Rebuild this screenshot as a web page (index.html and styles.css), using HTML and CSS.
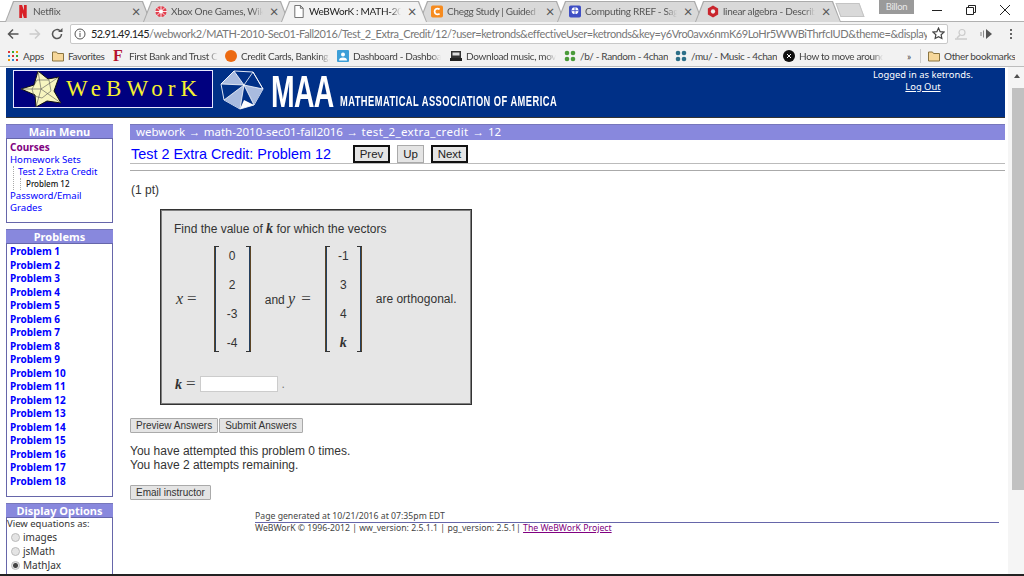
FILE: index.html
```html
<!DOCTYPE html>
<html lang="en">
<head>
    <meta charset="UTF-8">
    <title>WeBWorK : MATH-2010-Sec01-Fall2016 : Test_2_Extra_Credit : 12</title>
    <link rel="stylesheet" href="styles.css">
</head>
<body>
    <div class="tabstrip">
        <div class="tab">
            <svg class="tab-icon" viewBox="0 0 12 14"><path d="M2 0h3l2 6V0h3v14H7L5 8v6H2z" fill="#d81f26"/></svg>
            <span class="tab-title">Netflix</span><span class="tab-close">×</span>
        </div>
        <div class="tab">
            <svg class="tab-icon" viewBox="0 0 14 14"><circle cx="7" cy="7" r="6.5" fill="#e2404f"/><circle cx="7" cy="7" r="2.2" fill="#fff"/><path d="M7 0v14M0 7h14M2 2l10 10M12 2L2 12" stroke="#fff" stroke-width="1"/></svg>
            <span class="tab-title">Xbox One Games, Wikis</span><span class="tab-close">×</span>
        </div>
        <div class="tab tab-active">
            <svg class="tab-icon" viewBox="0 0 12 14"><path d="M1.5.5h6l3 3v10h-9zM7.5.5v3h3" fill="#fff" stroke="#666"/></svg>
            <span class="tab-title">WeBWorK : MATH-201</span><span class="tab-close">×</span>
        </div>
        <div class="tab">
            <svg class="tab-icon" viewBox="0 0 14 14"><rect width="14" height="14" rx="2" fill="#f68b1f"/><path d="M10 4.6A3.4 3.4 0 1 0 10 9.4" fill="none" stroke="#fff" stroke-width="2"/></svg>
            <span class="tab-title">Chegg Study | Guided S</span><span class="tab-close">×</span>
        </div>
        <div class="tab">
            <svg class="tab-icon" viewBox="0 0 14 14"><rect width="14" height="14" rx="2" fill="#3f4fc4"/><circle cx="7" cy="6" r="4" fill="#fff"/><path d="M3 6h8M7 2v8M2 11h10" stroke="#3f4fc4"/></svg>
            <span class="tab-title">Computing RREF - Sage</span><span class="tab-close">×</span>
        </div>
        <div class="tab">
            <svg class="tab-icon" viewBox="0 0 14 14"><path d="M7 0l6 3.5v7L7 14l-6-3.500v-7z" fill="#c9252d"/><circle cx="7" cy="7" r="2.500" fill="#eee"/></svg>
            <span class="tab-title">linear algebra - Describ</span><span class="tab-close">×</span>
        </div>
        <div class="tab-new"></div>
        <div class="user-badge">Billon</div>
        <div class="window-controls">
            <svg viewBox="0 0 12 12"><path d="M1 6.500h10" stroke="#222"/></svg>
            <svg viewBox="0 0 12 12"><path d="M1.500 3.500h7v7h-7zM3.500 3.500v-2h7v7h-2" fill="none" stroke="#222"/></svg>
            <svg viewBox="0 0 12 12"><path d="M1 1l10 10M11 1L1 11" stroke="#222"/></svg>
        </div>
    </div>

    <div class="toolbar">
        <svg class="tool-icon" viewBox="0 0 12 12"><path d="M11.500 6H1.500M6 1.500L1.500 6 6 10.500" fill="none" stroke="#555" stroke-width="1.500"/></svg>
        <svg class="tool-icon" viewBox="0 0 12 12"><path d="M.5 6h10M6 1.500L10.500 6 6 10.500" fill="none" stroke="#ccc" stroke-width="1.500"/></svg>
        <svg class="tool-icon" viewBox="0 0 12 12"><path d="M10.500 6A4.500 4.500 0 1 1 9 2.700" fill="none" stroke="#555" stroke-width="1.500"/><path d="M7 4h4.500V0z" fill="#555"/></svg>
        <div class="address">
            <svg class="info-icon" viewBox="0 0 12 12"><circle cx="6" cy="6" r="5" fill="none" stroke="#555"/><path d="M6 5v4M6 3v1.200" stroke="#555"/></svg>
            <span class="url"><b>52.91.49.145</b>/webwork2/MATH-2010-Sec01-Fall2016/Test_2_Extra_Credit/12/?user=ketronds&amp;effectiveUser=ketronds&amp;key=y6Vro0avx6nmK69LoHr5WWBiThrfcIUD&amp;theme=&amp;display</span>
            <svg class="star-icon" viewBox="0 0 12 12"><path d="M6 1l1.500 3.300 3.500.4-2.600 2.400.7 3.500L6 8.900l-3.100 1.700.7-3.500L1 4.700l3.500-.4z" fill="none" stroke="#444" stroke-width="1.100"/></svg>
        </div>
        <div class="tool-right">
            <svg viewBox="0 0 14 12"><circle cx="8" cy="4.500" r="3" fill="none" stroke="#ccc" stroke-width="1.200"/><path d="M1 11h12M6 7L3 10" stroke="#ccc" stroke-width="1.500"/></svg>
            <svg viewBox="0 0 14 12"><path d="M7 1v10l6-5z" fill="#555"/><path d="M4.500 2.500v7M2 4v4" stroke="#888"/></svg>
            <svg viewBox="0 0 14 12"><path d="M7 1v2M7 5v2M7 9v2" stroke="#555" stroke-width="1.800"/></svg>
        </div>
    </div>

    <div class="bookmarks">
        <div class="bm bm-apps">
            <svg class="bm-icon" viewBox="0 0 10 10"><path d="M0 0h2v2H0z" fill="#d33"/><path d="M4 0h2v2H4z" fill="#3a3"/><path d="M8 0h2v2H8z" fill="#e90"/><path d="M0 4h2v2H0z" fill="#38c"/><path d="M4 4h2v2H4z" fill="#d33"/><path d="M8 4h2v2H8z" fill="#3a3"/><path d="M0 8h2v2H0z" fill="#e90"/><path d="M4 8h2v2H4z" fill="#38c"/><path d="M8 8h2v2H8z" fill="#d33"/></svg>
            <span class="bm-text">Apps</span>
        </div>
        <div class="bm bm-favorites">
            <svg class="bm-icon" viewBox="0 0 12 11"><path d="M.5 1.500h4l1 1.500h6v7.500H.5z" fill="#f6d79a" stroke="#8a7440"/></svg>
            <span class="bm-text">Favorites</span>
        </div>
        <div class="bm bm-first">
            <span class="first-f">F</span>
            <span class="bm-text">First Bank and Trust C</span>
        </div>
        <div class="bm bm-credit">
            <svg class="bm-icon" viewBox="0 0 12 12"><circle cx="6" cy="6" r="6" fill="#ec6a12"/></svg>
            <span class="bm-text">Credit Cards, Banking,</span>
        </div>
        <div class="bm bm-dash">
            <svg class="bm-icon" viewBox="0 0 12 12"><rect width="12" height="12" rx="1" fill="#3d9fd8"/><circle cx="6" cy="4.500" r="2" fill="#fff"/><path d="M2 10.500a4 3 0 0 1 8 0z" fill="#fff"/></svg>
            <span class="bm-text">Dashboard - Dashboa</span>
        </div>
        <div class="bm bm-download">
            <svg class="bm-icon" viewBox="0 0 12 12"><rect x="1" y="1" width="10" height="7" fill="#333"/><rect x="2.500" y="2.500" width="7" height="3" fill="#ddd"/><rect y="8" width="12" height="3" fill="#222"/></svg>
            <span class="bm-text">Download music, mov</span>
        </div>
        <div class="bm bm-b">
            <svg class="bm-icon" viewBox="0 0 12 12"><circle cx="3" cy="3" r="2.300" fill="#4a9b3a"/><circle cx="9" cy="3" r="2.300" fill="#4a9b3a"/><circle cx="3" cy="9" r="2.300" fill="#4a9b3a"/><circle cx="9" cy="9" r="2.300" fill="#4a9b3a"/></svg>
            <span class="bm-text">/b/ - Random - 4chan</span>
        </div>
        <div class="bm bm-mu">
            <svg class="bm-icon" viewBox="0 0 12 12"><circle cx="3" cy="3" r="2.300" fill="#2d6f88"/><circle cx="9" cy="3" r="2.300" fill="#2d6f88"/><circle cx="3" cy="9" r="2.300" fill="#2d6f88"/><circle cx="9" cy="9" r="2.300" fill="#2d6f88"/></svg>
            <span class="bm-text">/mu/ - Music - 4chan</span>
        </div>
        <div class="bm bm-move">
            <svg class="bm-icon" viewBox="0 0 12 12"><circle cx="6" cy="6" r="6" fill="#111"/><path d="M4 4l4 4M8 4L4 8" stroke="#fff"/></svg>
            <span class="bm-text">How to move around</span>
        </div>
        <span class="bm-more">»</span>
        <span class="bm-sep"></span>
        <div class="bm bm-other">
            <svg class="bm-icon" viewBox="0 0 12 11"><path d="M.5 1.500h4l1 1.500h6v7.500H.5z" fill="#f6d79a" stroke="#8a7440"/></svg>
            <span class="bm-text">Other bookmarks</span>
        </div>
    </div>

    <div class="viewport">
        <div class="page">
            <div class="masthead">
                <div class="ww-logo">
                    <svg class="ww-star" viewBox="0 0 42 36"><path d="M0 18L13 14 17 0 27 8 38 6 33 20 40 32 26 30 15 36 14 24z" fill="#f7f5c0" stroke="#111"/><path d="M0 18L20 18 17 0M20 18L38 6M20 18L40 32M20 18L15 36M11 18L16 9 28 9 30 20 21 27 13 25z" fill="none" stroke="#555" stroke-width=".6"/></svg>
                    <span class="ww-name">WeBWorK</span>
                </div>
                <svg class="maa-mark" viewBox="0 0 44 40"><path d="M14 1L33 2 43 19 34 35 20 39 4 30 1 14z" fill="#003087" stroke="#dfe6f5"/><path d="M14 1L24 15 1 14zM24 15L43 19 34 35zM24 15L4 30 20 39z" fill="#a9bbdf"/><path d="M14 1L24 15 43 19M24 15L4 30M24 15L1 14M24 15L34 35M14 1L1 14M33 2L24 15M24 15L20 39M33 2L43 19" fill="none" stroke="#fff" stroke-width=".8"/><path d="M20 39L34 35 24 30z" fill="#fff"/></svg>
                <span class="maa-big">MAA</span>
                <span class="maa-long">MATHEMATICAL ASSOCIATION OF AMERICA</span>
                <div class="login-info">Logged in as ketronds.<br><a href="#">Log Out</a></div>
            </div>

            <div class="columns">
                <div class="sidebar">
                    <div class="side-box box-menu">
                        <h2>Main Menu</h2>
                        <a class="menu-link visited" href="#"><b>Courses</b></a>
                        <a class="menu-link" href="#">Homework Sets</a>
                        <div class="sub-menu">
                            <a class="menu-link" href="#">Test 2 Extra Credit</a>
                            <div class="sub-sub-menu">Problem 12</div>
                        </div>
                        <a class="menu-link" href="#">Password/Email</a>
                        <a class="menu-link" href="#">Grades</a>
                    </div>
                    <div class="side-box box-problems">
                        <h2>Problems</h2>
                        <a href="#">Problem 1</a>
                        <a href="#">Problem 2</a>
                        <a href="#">Problem 3</a>
                        <a href="#">Problem 4</a>
                        <a href="#">Problem 5</a>
                        <a href="#">Problem 6</a>
                        <a href="#">Problem 7</a>
                        <a href="#">Problem 8</a>
                        <a href="#">Problem 9</a>
                        <a href="#">Problem 10</a>
                        <a href="#">Problem 11</a>
                        <a href="#">Problem 12</a>
                        <a href="#">Problem 13</a>
                        <a href="#">Problem 14</a>
                        <a href="#">Problem 15</a>
                        <a href="#">Problem 16</a>
                        <a href="#">Problem 17</a>
                        <a href="#">Problem 18</a>
                    </div>
                    <div class="side-box box-options">
                        <h2>Display Options</h2>
                        <div class="option-label">View equations as:</div>
                        <label class="option"><span class="radio"></span>images</label>
                        <label class="option"><span class="radio"></span>jsMath</label>
                        <label class="option"><span class="radio radio-on"></span>MathJax</label>
                    </div>
                </div>

                <div class="content">
                    <div class="breadcrumb">webwork <span class="arrow">→</span> math-2010-sec01-fall2016 <span class="arrow">→</span> <span class="crumb-test">test_2_extra_credit</span> <span class="arrow arrow-last">→</span> 12</div>
                    <div class="title-row">
                        <h1>Test 2 Extra Credit: Problem 12</h1>
                        <div class="nav-buttons">
                            <span class="nav-btn nav-strong">Prev</span>
                            <span class="nav-btn">Up</span>
                            <span class="nav-btn nav-strong">Next</span>
                        </div>
                    </div>
                    <div class="title-rule"></div>
                    <p class="points">(1 pt)</p>
                    <div class="problem">
                        <p class="problem-text">Find the value of <i class="var var-k">k</i> for which the vectors</p>
                        <div class="equation">
                            <span class="math"><i class="var">x</i><span class="eq">=</span></span>
                            <div class="matrix matrix-x">
                                <span>0</span><span>2</span><span>-3</span><span>-4</span>
                            </div>
                            <span class="and">and <span class="math"><i class="var">y</i><span class="eq">=</span></span></span>
                            <div class="matrix matrix-y">
                                <span>-1</span><span>3</span><span>4</span><span><i class="var var-k">k</i></span>
                            </div>
                            <span class="tail">are orthogonal.</span>
                        </div>
                        <div class="answer">
                            <span class="math"><i class="var var-k">k</i><span class="eq">=</span></span>
                            <input class="answer-box" type="text">
                            <span class="answer-dot">.</span>
                        </div>
                    </div>
                    <div class="actions">
                        <button>Preview Answers</button><button>Submit Answers</button>
                    </div>
                    <p class="attempts">You have attempted this problem 0 times.<br>You have 2 attempts remaining.</p>
                    <button class="email-btn">Email instructor</button>
                    <div class="footer">
                        <div class="generated">Page generated at 10/21/2016 at 07:35pm EDT</div>
                        <div class="copyright">WeBWorK © 1996-2012 | ww_version: 2.5.1.1 | pg_version: 2.5.1| <a href="#">The WeBWorK Project</a></div>
                    </div>
                </div>
            </div>
        </div>
        <div class="scrollbar">
            <span class="scroll-up"></span>
            <div class="scroll-thumb"></div>
        </div>
    </div>
    <div class="taskbar"></div>
</body>
</html>
```

FILE: styles.css
```css
html, body {
    margin: 0;
    padding: 0;
    height: 576px;
    overflow: hidden;
    background: #fff;
}
body {
    font-family: "Liberation Sans", Arial, sans-serif;
    display: flex;
    flex-direction: column;
}

/* browser chrome */
.tabstrip {
    height: 22px;
    flex: none;
    display: flex;
    align-items: flex-end;
    padding-left: 5px;
    position: relative;
    border-bottom: 1px solid #b0b0b0;
    box-sizing: border-box;
    font-family: Lato, sans-serif;
    font-size: 10px;
    letter-spacing: -.3px;
}
.tab {
    width: 146px;
    height: 21px;
    margin-left: -8px;
    margin-bottom: -1px;
    flex: none;
    box-sizing: border-box;
    padding: 0 8px 1px 12px;
    display: flex;
    align-items: center;
    position: relative;
    color: #555;
    background: #ababab;
    clip-path: polygon(0 100%, 8px 0, calc(100% - 8px) 0, 100% 100%);
}
.tab::before {
    content: "";
    position: absolute;
    inset: 1px 1px 0;
    background: #d9d9d9;
    clip-path: polygon(0 100%, 8px 0, calc(100% - 8px) 0, 100% 100%);
}
.tab:first-child {
    margin-left: 0;
}
.tab-active {
    color: #222;
    z-index: 2;
}
.tab-active::before {
    background: #f2f2f2;
}
.tab-icon {
    width: 12px;
    height: 13px;
    flex: none;
    margin-right: 4px;
    position: relative;
}
.tab-title {
    flex: 1;
    white-space: nowrap;
    overflow: hidden;
    position: relative;
    -webkit-mask-image: linear-gradient(to right, #000 88%, transparent);
}
.tab-close {
    position: relative;
    width: 14px;
    text-align: center;
    font-size: 15px;
    line-height: 14px;
    color: #555;
    margin-left: 4px;
}
.tab-new {
    width: 22px;
    height: 12px;
    margin: 0 0 4px -3px;
    background: #d9d9d9;
    border: 1px solid #c4c4c4;
    transform: skewX(20deg);
    flex: none;
}
.user-badge {
    position: absolute;
    left: 879px;
    top: 0;
    width: 35px;
    height: 14px;
    background: #9a9a9a;
    color: #e8e8e8;
    text-align: center;
    font-size: 9.500px;
    line-height: 14px;
}
.window-controls {
    position: absolute;
    right: 2px;
    top: 4px;
    display: flex;
}
.window-controls svg {
    width: 12px;
    height: 12px;
    padding: 0 11px;
}
.toolbar {
    height: 23px;
    flex: none;
    background: #f2f2f2;
    display: flex;
    align-items: center;
    padding-left: 7px;
    box-sizing: border-box;
}
.tool-icon {
    width: 12px;
    height: 12px;
    margin-right: 10px;
    flex: none;
}
.address {
    width: 878px;
    height: 20px;
    margin-left: -3px;
    flex: none;
    box-sizing: border-box;
    background: #fff;
    border: 1px solid #c8c8c8;
    border-radius: 2px;
    display: flex;
    align-items: center;
    padding-left: 3px;
    font-family: Lato, sans-serif;
    font-size: 11px;
    letter-spacing: -.4px;
    color: #777;
}
.info-icon {
    width: 12px;
    height: 12px;
    flex: none;
    margin-right: 5px;
}
.url {
    width: 836px;
    flex: none;
    white-space: nowrap;
    overflow: hidden;
}
.url b {
    font-weight: 400;
    color: #222;
    letter-spacing: -.6px;
}
.star-icon {
    width: 13px;
    height: 13px;
    flex: none;
    margin-left: 5px;
}
.tool-right {
    display: flex;
    margin-left: 6px;
    flex: none;
}
.tool-right svg {
    width: 14px;
    height: 12px;
    margin-right: 11px;
}
.bookmarks {
    height: 22px;
    flex: none;
    background: #f2f2f2;
    border-bottom: 1px solid #bdbdbd;
    box-sizing: border-box;
    display: flex;
    align-items: center;
    padding: 1px 0 0 8px;
    font-family: Lato, sans-serif;
    font-size: 10px;
    letter-spacing: -.35px;
    color: #444;
}
.bm {
    display: flex;
    align-items: center;
    flex: none;
    overflow: hidden;
}
.bm-icon {
    width: 12px;
    height: 12px;
    flex: none;
    margin-right: 4px;
}
.bm-apps .bm-icon {
    width: 10px;
    height: 10px;
    margin-right: 5px;
}
.bm-text {
    white-space: nowrap;
    overflow: hidden;
    -webkit-mask-image: linear-gradient(to right, #000 88%, transparent);
}
.bm-apps .bm-text, .bm-favorites .bm-text, .bm-other .bm-text,
.bm-b .bm-text, .bm-mu .bm-text {
    -webkit-mask-image: none;
}
.first-f {
    width: 11px;
    margin-right: 5px;
    font: bold 16px/16px "Liberation Serif", serif;
    color: #b5122f;
}
.bm-apps { width: 44px; }
.bm-favorites { width: 61px; }
.bm-first { width: 112px; }
.bm-credit { width: 112px; }
.bm-dash { width: 113px; }
.bm-download { width: 114px; }
.bm-b { width: 111px; }
.bm-mu { width: 108px; }
.bm-move { width: 100px; }
.bm-more {
    width: 10px;
    margin-left: 24px;
    flex: none;
}
.bm-sep {
    width: 1px;
    height: 14px;
    margin: 0 7px 0 3px;
    background: #ccc;
    flex: none;
}
.bm-other { width: 90px; }

/* page */
.viewport {
    flex: 1;
    min-height: 0;
    display: flex;
    overflow: hidden;
}
.page {
    width: 1008px;
    flex: none;
    box-sizing: border-box;
    padding: 1px 3px 0 6px;
    font-family: "Noto Sans", sans-serif;
}
.scrollbar {
    flex: 1;
    background: #f5f5f5;
    position: relative;
    box-sizing: border-box;
    padding: 21px 0 0 4px;
}
.scroll-up {
    position: absolute;
    left: 6px;
    top: 7px;
    border: 3.500px solid transparent;
    border-top: 0;
    border-bottom: 4px solid #505050;
}
.scroll-thumb {
    height: 402px;
    background: #c1c1c1;
}
.taskbar {
    height: 2px;
    flex: none;
    background: #222;
}
.masthead {
    height: 50px;
    background: #003087;
    border-bottom: 1px solid #333;
    box-sizing: border-box;
    display: flex;
    align-items: flex-start;
    padding: 2px 0 0 7px;
    position: relative;
    color: #fff;
}
.ww-logo {
    width: 200px;
    height: 38px;
    flex: none;
    box-sizing: border-box;
    background: #00007f;
    border: 1px solid #e8e8ff;
    display: flex;
    align-items: center;
    padding-left: 7px;
}
.ww-star {
    width: 42px;
    height: 36px;
    flex: none;
}
.ww-name {
    margin-left: 3px;
    font: 23px "Liberation Serif", serif;
    letter-spacing: 5px;
    color: #f6f030;
}
.maa-mark {
    width: 44px;
    height: 40px;
    flex: none;
    margin: 0 0 0 7px;
}
.maa-big {
    margin: 0 -37px 0 7px;
    font: bold 45px/43px "Liberation Sans", sans-serif;
    letter-spacing: -1px;
    flex: none;
    transform: scaleX(.63);
    transform-origin: left center;
}
.maa-long {
    margin: 21px 0 0 7px;
    font: bold 14px/20px "Liberation Sans", sans-serif;
    letter-spacing: .7px;
    white-space: nowrap;
    flex: none;
    transform: scaleX(.665);
    transform-origin: left center;
}
.login-info {
    position: absolute;
    right: 32px;
    top: 1px;
    text-align: center;
    font-size: 9.400px;
    line-height: 12px;
}
.login-info a {
    color: #fff;
}
.columns {
    display: flex;
    margin-top: 6px;
}
.sidebar {
    width: 107px;
    flex: none;
}
.side-box {
    border: 1px solid #6666aa;
    border-top: 0;
    margin-bottom: 6px;
    box-sizing: border-box;
    font-size: 10px;
    line-height: 13.500px;
    background: #fff;
}
.side-box h2 {
    margin: 0 -1px 1px;
    height: 15px;
    background: #8888dd;
    border-top: 1px solid #7777bb;
    border-bottom: 1px solid #6666aa;
    box-sizing: border-box;
    color: #fff;
    text-align: center;
    font-size: 11px;
    line-height: 14px;
    font-weight: 700;
}
.side-box a {
    display: block;
    color: #0000ff;
    text-decoration: none;
    padding-left: 3px;
}
.box-menu {
    height: 99px;
    font-size: 9.600px;
    line-height: 12px;
}
.box-menu h2 {
    margin-bottom: 2px;
}
.box-menu b {
    font-size: 10px;
}
.box-menu a.visited {
    color: #800080;
}
.sub-menu {
    margin-left: 6px;
    padding-left: 4px;
    border-left: 1px dotted #aaa;
    font-size: 9.400px;
    line-height: 12px;
}
.sub-menu .menu-link {
    padding-left: 0;
}
.sub-sub-menu {
    margin-left: 2px;
    padding-left: 5px;
    border-left: 1px dotted #aaa;
    font-size: 8px;
    color: #111;
    font-weight: 500;
}
.box-problems {
    height: 268px;
}
.box-problems a {
    font-weight: 700;
}
.box-options {
    height: 80px;
    color: #333;
}
.box-options h2 {
    margin-bottom: 0;
}
.option-label {
    font-size: 9.500px;
    line-height: 12.500px;
}
.option {
    display: flex;
    align-items: center;
    padding-left: 4px;
    height: 14px;
    font-size: 10px;
}
.radio {
    width: 9px;
    height: 9px;
    margin-right: 3px;
    border: 1px solid #bbb;
    border-radius: 50%;
    background: #e4e4e4;
    box-sizing: border-box;
}
.radio-on {
    background: radial-gradient(circle, #444 0 2px, #e4e4e4 3px);
}
.content {
    flex: 1;
    margin-left: 17px;
    min-width: 0;
    color: #333;
}
.breadcrumb {
    height: 16px;
    background: #8888dd;
    border-top: 1px solid #7777bb;
    box-sizing: border-box;
    color: #fff;
    font-size: 11.500px;
    line-height: 14px;
    padding-left: 6px;
}
.arrow {
    font-family: "Liberation Sans", Arial, sans-serif;
    margin: 0 .5px;
}
.arrow-last {
    margin: 0 1px;
}
.crumb-test {
    letter-spacing: .35px;
}
.title-row {
    display: flex;
    align-items: flex-end;
    height: 24px;
    border-bottom: 1px solid #bbb;
    box-sizing: border-box;
    font-family: "Liberation Sans", Arial, sans-serif;
}
.title-row h1 {
    margin: 0 0 0 1px;
    width: 222px;
    font-size: 14.400px;
    line-height: 18px;
    font-weight: 400;
    color: #0000ff;
    white-space: nowrap;
}
.nav-buttons {
    display: flex;
    gap: 7px;
}
.nav-btn {
    height: 18px;
    width: 27px;
    box-sizing: border-box;
    border: 1px solid #aaa;
    background: #e4e4e4;
    text-align: center;
    font-size: 11.500px;
    line-height: 16px;
    color: #222;
}
.nav-strong {
    width: 37px;
    border: 2px solid #111;
    line-height: 14px;
}
.title-rule {
    height: 1px;
    margin-top: 6px;
    background: #aaa;
}
.points {
    margin: 11px 0 0 1px;
    font: 12px/16px "Liberation Sans", Arial, sans-serif;
}
.problem {
    width: 312px;
    height: 196px;
    margin: 11px 0 0 30px;
    box-sizing: border-box;
    background: #e6e6e6;
    border: 2px solid #808080;
    outline: 1px solid #333;
    outline-offset: -1px;
    padding: 11px 0 0 12px;
    font: 12px/14px "Liberation Sans", Arial, sans-serif;
}
.problem-text {
    margin: 0;
}
.var {
    font-family: "Liberation Serif", serif;
    font-size: 16px;
    line-height: 14px;
}
.var-k {
    font-size: 14px;
    font-weight: 700;
}
.math {
    font-family: "Liberation Serif", serif;
    white-space: nowrap;
}
.eq {
    margin-left: 4px;
    font-size: 17px;
    line-height: 14px;
    color: #444;
}
.and .eq {
    margin-left: 6px;
}
.equation {
    display: flex;
    align-items: center;
    margin-top: 10px;
    padding-left: 2px;
}
.matrix {
    width: 37px;
    height: 106px;
    flex: none;
    box-sizing: border-box;
    border-top: 1px solid #333;
    border-bottom: 1px solid #333;
    position: relative;
    display: grid;
    grid-template-rows: repeat(4, 29px);
    align-content: center;
    justify-items: center;
    align-items: center;
    background:
        linear-gradient(to right, #5c4526 50%, #24405f 50%) left top / 2px 100% no-repeat,
        linear-gradient(to right, #24405f 50%, #5c4526 50%) right top / 2px 100% no-repeat;
    color: #333;
}
.matrix::before {
    content: "";
    position: absolute;
    top: -1px;
    bottom: -1px;
    left: 5px;
    right: 5px;
    background: #e6e6e6;
}
.matrix span {
    position: relative;
}
.matrix-x {
    margin-left: 17px;
}
.matrix-y {
    margin-left: 14px;
}
.and {
    margin-left: 14px;
}
.tail {
    margin-left: 14px;
}
.answer {
    display: flex;
    align-items: center;
    margin-top: 24px;
    margin-left: 1px;
}
.answer-box {
    width: 78px;
    height: 16px;
    margin-left: 4px;
    padding: 0;
    box-sizing: border-box;
    border: 1px solid #ccc;
    background: #fff;
}
.answer-dot {
    margin-left: 4px;
    color: #777;
}
.actions {
    margin-top: 13px;
    display: flex;
}
button {
    height: 15px;
    padding: 0 5px;
    box-sizing: border-box;
    border: 1px solid #aaa;
    border-radius: 1px;
    background: #e4e4e4;
    color: #333;
    font: 10px/13px "Liberation Sans", Arial, sans-serif;
}
.actions button + button {
    margin-left: 1px;
}
.attempts {
    margin: 12px 0 7px;
    font: 12px/13.500px "Liberation Sans", Arial, sans-serif;
}
.footer {
    margin: 11px 6px 0 125px;
    font-size: 8.700px;
    line-height: 10px;
    color: #444;
}
.generated {
    border-bottom: 1px solid #6666aa;
    line-height: 8px;
    padding-bottom: 2px;
}
.copyright a {
    color: #800080;
}
```
